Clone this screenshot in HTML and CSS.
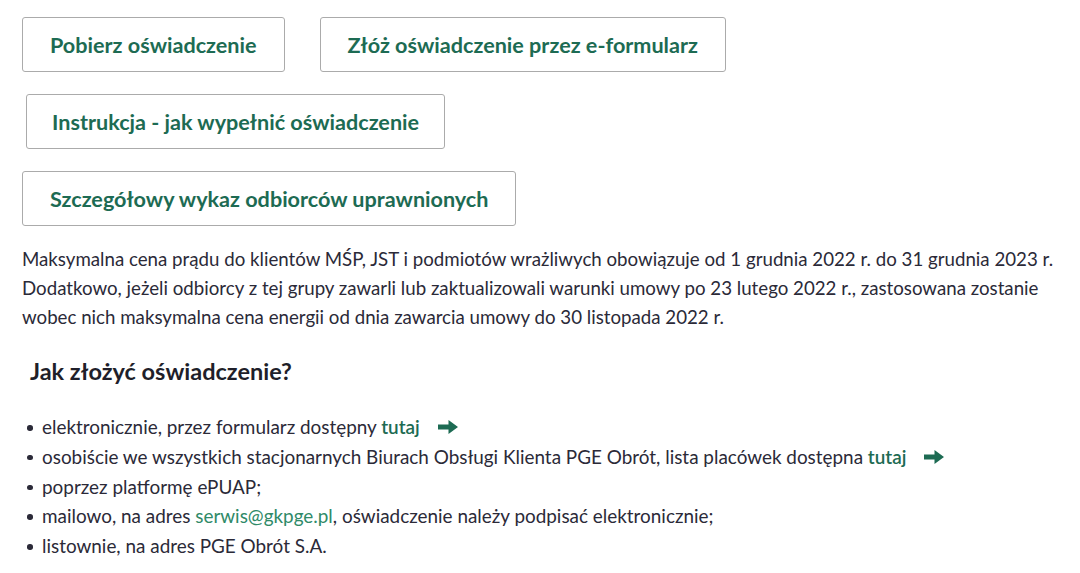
FILE: index.html
```html
<!DOCTYPE html>
<html lang="pl">
<head>
  <meta charset="UTF-8" />
  <meta name="viewport" content="width=device-width, initial-scale=1.0"/>
  <title>Oświadczenie</title>
  <link rel="stylesheet" href="styles.css">
</head>
<body>
  <section class="content">
    <div class="btn-row">
      <a class="btn" href="#">Pobierz oświadczenie</a>
      <a class="btn" href="#">Złóż oświadczenie przez e-formularz</a>
    </div>
    <div class="btn-row">
      <a class="btn btn-shift" href="#">Instrukcja - jak wypełnić oświadczenie</a>
    </div>
    <div class="btn-row">
      <a class="btn" href="#">Szczegółowy wykaz odbiorców uprawnionych</a>
    </div>

    <p class="lead">Maksymalna cena prądu do klientów MŚP, JST i podmiotów wrażliwych obowiązuje od 1 grudnia 2022 r. do 31 grudnia 2023 r. Dodatkowo, jeżeli odbiorcy z tej grupy zawarli lub zaktualizowali warunki umowy po 23 lutego 2022 r., zastosowana zostanie wobec nich maksymalna cena energii od dnia zawarcia umowy do 30 listopada 2022 r.</p>

    <h2>Jak złożyć oświadczenie?</h2>

    <ul class="ways">
      <li>elektronicznie, przez formularz dostępny <a href="#">tutaj</a><span class="arrow"><svg viewBox="0 0 20 16"><path d="M0 5.5H10.5V1L20 8L10.5 15V10.5H0Z"/></svg></span></li>
      <li>osobiście we wszystkich stacjonarnych Biurach Obsługi Klienta PGE Obrót, lista placówek dostępna <a href="#">tutaj</a><span class="arrow"><svg viewBox="0 0 20 16"><path d="M0 5.5H10.5V1L20 8L10.5 15V10.5H0Z"/></svg></span></li>
      <li>poprzez platformę ePUAP;</li>
      <li>mailowo, na adres <a class="mail" href="#">serwis@gkpge.pl</a>, oświadczenie należy podpisać elektronicznie;</li>
      <li>listownie, na adres PGE Obrót S.A.</li>
    </ul>
  </section>
</body>
</html>
```

FILE: styles.css
```css
:root {
  --green: #1d6b53;
  --green-light: #2f8a68;
  --text: #2b2a38;
  --border: #ababab;
}

body {
  margin: 0;
  padding: 0;
  font-family: Lato, 'Open Sans', sans-serif;
  color: var(--text);
  background: #fff;
}

.content {
  padding: 17px 20px 0 22px;
}

.btn-row {
  display: flex;
  gap: 35px;
  margin-bottom: 22px;
}

.btn {
  display: inline-flex;
  align-items: center;
  justify-content: center;
  height: 53px;
  padding: 0 27px;
  border: 1.5px solid var(--border);
  border-radius: 3px;
  color: var(--green);
  font-size: 21.6px;
  font-weight: bold;
  text-decoration: none;
}

.btn-shift {
  margin-left: 4px;
  padding: 0 25px;
}

.lead {
  margin: -3px 0 0 0;
  font-size: 18.7px;
  line-height: 29px;
}

h2 {
  margin: 25px 0 0 8px;
  font-size: 23.5px;
  font-weight: bold;
  color: #1f1f2a;
}

.ways {
  list-style: none;
  margin: 27px 0 0 0;
  padding: 0 0 0 5px;
  font-size: 18.9px;
  line-height: 29.8px;
}

.ways li {
  position: relative;
  padding-left: 15px;
}

.ways li::before {
  content: "";
  position: absolute;
  left: 0;
  top: 13px;
  width: 5.5px;
  height: 5.5px;
  border-radius: 50%;
  background: var(--text);
}

.ways a {
  color: var(--green);
  text-decoration: none;
  font-weight: 600;
}

.ways a.mail {
  color: var(--green-light);
  font-weight: normal;
}

.arrow {
  display: inline-block;
  margin-left: 18px;
  width: 20px;
  height: 16px;
  vertical-align: -1px;
}

.arrow svg {
  display: block;
  width: 20px;
  height: 16px;
  fill: var(--green);
}
```
